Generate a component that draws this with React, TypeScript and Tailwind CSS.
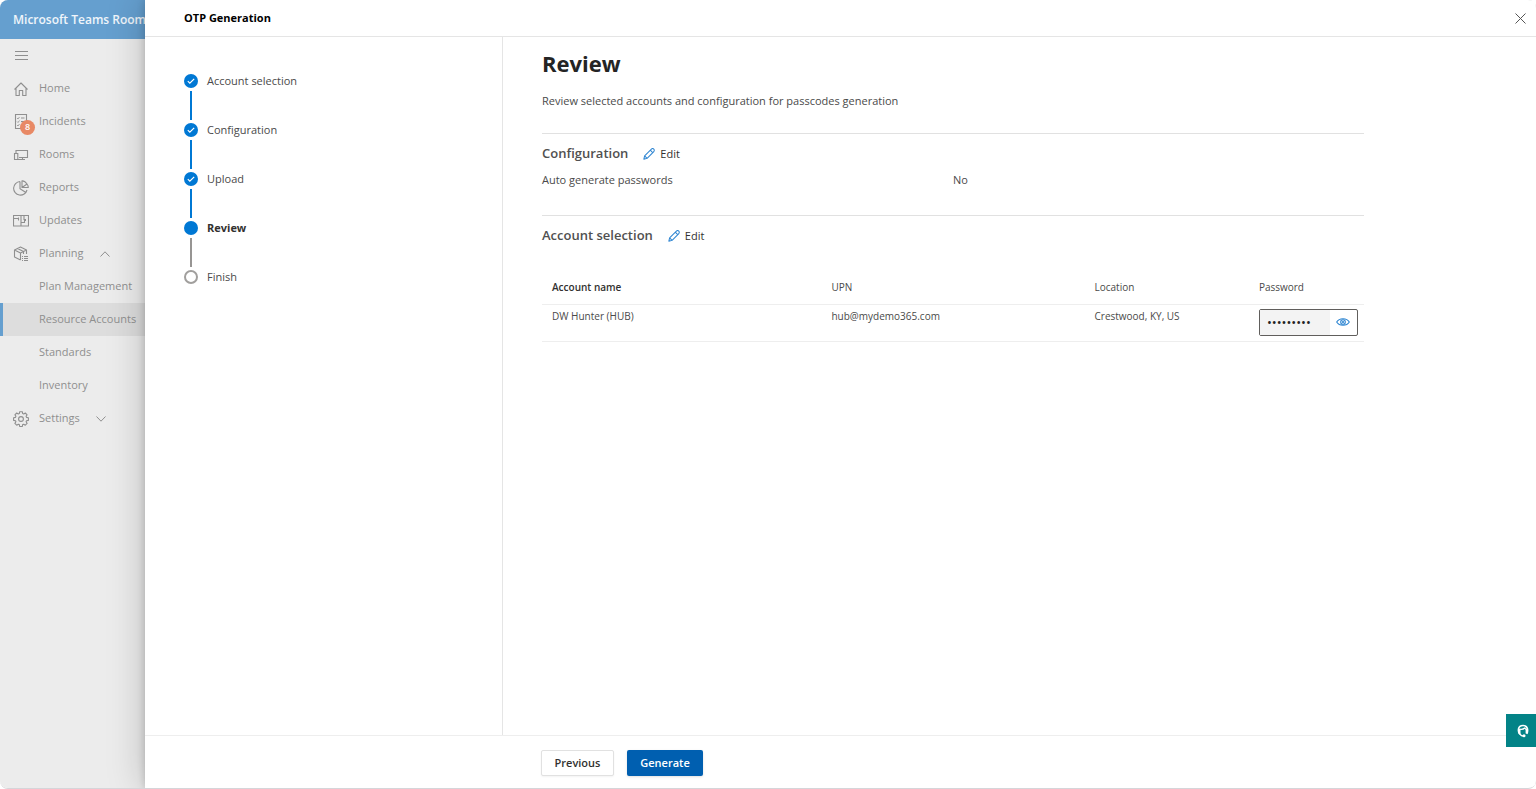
import { useState, type ReactNode } from "react";

type NavItem = {
  label: string;
  icon?: ReactNode;
  badge?: number;
  chevron?: "up" | "down";
  active?: boolean;
};

type StepState = "done" | "current" | "todo";

const iconProps = {
  viewBox: "0 0 16 16",
  fill: "none",
  stroke: "currentColor",
  strokeWidth: 1.1,
  className: "h-4 w-4 shrink-0",
  "aria-hidden": true,
};

const HomeIcon = () => (
  <svg {...iconProps}>
    <path d="M1.500 8.500 8 2l6.500 6.500M3 7.200v7.300h3.300V9.500h3.400v5H13V7.200" strokeLinejoin="round" />
  </svg>
);

const IncidentsIcon = () => (
  <svg {...iconProps}>
    <path d="M2.500.5h11v14h-11zM8 4h3.500M8 7.500h3.500M8 11h3.500" />
    <path d="m4 4 1 1 1.500-2M4 7.500l1 1 1.500-2M4 11l1 1 1.500-2" strokeWidth=".8" />
  </svg>
);

const RoomsIcon = () => (
  <svg {...iconProps}>
    <path d="M3 6.500V3.500h11.500v7H6M1.500 6.500h3.300v6H1.500zM5 12.500h7M9.500 10.500v2" />
  </svg>
);

const ReportsIcon = () => (
  <svg {...iconProps}>
    <path d="M7 1.500a6.800 6.800 0 1 0 7 8.500M7 1.500v7.300l5.500 3.500" />
    <path d="M9 7.500V.7a6.500 6.500 0 0 1 5 3.300zM9 7.500l5-3.500c.8 1 1.300 2.200 1.300 3.500z" strokeLinejoin="round" />
  </svg>
);

const UpdatesIcon = () => (
  <svg {...iconProps}>
    <path d="M.5 2.500h15v10.500H.5zM8 2.500v10.500M.5 5.500h5M5.500 4.500v3M11 2.500v4h2M8 9.500h3.500V7.500H13" />
  </svg>
);

const PlanningIcon = () => (
  <svg {...iconProps}>
    <path d="M7.500 14 1.500 11V4L7.500 1l6 3v4M1.500 4l6 3 6-3M7.500 7v7M4.500 2.500l6 3v2.500" strokeLinejoin="round" />
    <path d="M9 10.500h1M11 10.500h4M9 12.500h1M11 12.500h4M9 14.500h1M11 14.500h4" />
  </svg>
);

const SettingsIcon = () => (
  <svg {...iconProps}>
    <circle cx="8" cy="8" r="2.400" />
    <path
      d="M6.700.7h2.600l.4 1.900 1 .4 1.600-1 1.800 1.800-1 1.600.4 1 1.900.4v2.600l-1.900.4-.4 1 1 1.600-1.800 1.800-1.600-1-1 .4-.4 1.900H6.700l-.4-1.900-1-.4-1.600 1-1.800-1.800 1-1.600-.4-1-1.900-.4V6.800l1.900-.4.4-1-1-1.600L3.700 2l1.600 1 1-.4z"
      strokeLinejoin="round"
    />
  </svg>
);

const PencilIcon = () => (
  <svg viewBox="0 0 14 14" fill="none" stroke="currentColor" strokeWidth="1.2" className="h-3 w-3 text-[#2f86d2]" aria-hidden>
    <path d="m1 13 .9-3.800L9.800 1.300a1.900 1.900 0 0 1 2.800 2.800L4.800 12zM8.500 2.600l2.800 2.800M1.900 9.200l2.900 2.800" strokeLinejoin="round" />
  </svg>
);

const EyeIcon = () => (
  <svg viewBox="0 0 14 8" fill="none" stroke="currentColor" strokeWidth="1.1" className="h-2 w-3.5" aria-hidden>
    <path d="M.7 4C2 1.800 4.200.7 7 .7S12 1.800 13.300 4C12 6.200 9.800 7.300 7 7.300S2 6.200.7 4z" />
    <circle cx="7" cy="4" r="2.300" />
    <circle cx="7" cy="4" r=".5" fill="currentColor" />
  </svg>
);

const Chevron = ({ direction }: { direction: "up" | "down" }) => (
  <svg viewBox="0 0 10 6" fill="none" stroke="currentColor" className="h-1.5 w-2.5" aria-hidden>
    <path d={direction === "up" ? "M.5 5.500 5 .8l4.500 4.700" : "M.5.5 5 5.200 9.500.5"} />
  </svg>
);

const navItems: NavItem[] = [
  { label: "Home", icon: <HomeIcon /> },
  { label: "Incidents", icon: <IncidentsIcon />, badge: 8 },
  { label: "Rooms", icon: <RoomsIcon /> },
  { label: "Reports", icon: <ReportsIcon /> },
  { label: "Updates", icon: <UpdatesIcon /> },
  { label: "Planning", icon: <PlanningIcon />, chevron: "up" },
  { label: "Plan Management" },
  { label: "Resource Accounts", active: true },
  { label: "Standards" },
  { label: "Inventory" },
  { label: "Settings", icon: <SettingsIcon />, chevron: "down" },
];

const steps: Array<{ label: string; state: StepState }> = [
  { label: "Account selection", state: "done" },
  { label: "Configuration", state: "done" },
  { label: "Upload", state: "done" },
  { label: "Review", state: "current" },
  { label: "Finish", state: "todo" },
];

function Sidebar() {
  return (
    <aside className="w-[145px] shrink-0 overflow-hidden whitespace-nowrap bg-[#ececec] text-[#8f8f8f]">
      <div className="flex h-[39px] items-center bg-[#659fcf] pl-[13px] text-xs font-semibold text-white/90">
        Microsoft Teams Room
      </div>
      <button type="button" aria-label="Toggle navigation" className="flex h-[33px] items-center pl-[15px]">
        <svg viewBox="0 0 13 9" stroke="currentColor" className="h-[9px] w-[13px]">
          <path d="M0 .5h13M0 4.500h13M0 8.500h13" />
        </svg>
      </button>
      <nav>
        {navItems.map((item) => (
          <a
            key={item.label}
            href="#"
            className={`flex h-[33px] items-center border-l-[3px] text-[11px] ${
              item.active ? "border-[#659fcf] bg-[#dddddd]" : "border-transparent"
            } ${item.icon ? "pl-2.5" : "pl-9"}`}
          >
            {item.icon && (
              <span className="relative mr-2.5">
                {item.icon}
                {item.badge && (
                  <span className="absolute -right-1.5 top-1.5 flex h-[15px] w-[15px] items-center justify-center rounded-full bg-[#e88965] text-[9px] font-semibold text-white">
                    {item.badge}
                  </span>
                )}
              </span>
            )}
            {item.label}
            {item.chevron && (
              <span className="ml-4">
                <Chevron direction={item.chevron} />
              </span>
            )}
          </a>
        ))}
      </nav>
    </aside>
  );
}

function StepDot({ state }: { state: StepState }) {
  if (state === "todo") return <span className="h-3.5 w-3.5 rounded-full border-2 border-[#a19f9d]" />;
  return (
    <span className="flex h-3.5 w-3.5 items-center justify-center rounded-full bg-[#0078d4]">
      {state === "done" && (
        <svg viewBox="0 0 8 8" fill="none" stroke="white" strokeWidth="1.2" className="h-2 w-2" aria-hidden>
          <path d="m.8 4.200 2 2L7.200 1.800" />
        </svg>
      )}
    </span>
  );
}

function Steps() {
  return (
    <ol className="w-[358px] shrink-0 border-r border-[#e5e5e5] pl-[39px] pt-[37px] text-[11px] text-[#4a4a4a]">
      {steps.map((step, index) => (
        <li key={step.label} className="flex gap-[9px]">
          <div className="flex flex-col items-center">
            <StepDot state={step.state} />
            {index < steps.length - 1 && (
              <span className={`my-[3px] h-[29px] w-0.5 ${step.state === "current" ? "bg-[#979593]" : "bg-[#0078d4]"}`} />
            )}
          </div>
          <span className={`leading-[14px] ${step.state === "current" ? "font-bold text-[#323130]" : ""}`}>{step.label}</span>
        </li>
      ))}
    </ol>
  );
}

function SectionHeader({ title }: { title: string }) {
  return (
    <div className="flex h-5 items-center gap-[15px]">
      <h2 className="text-[13px] font-semibold text-[#505050]">{title}</h2>
      <button type="button" className="flex items-center gap-[5px] text-[11px] leading-4 text-[#323130]">
        <PencilIcon />
        Edit
      </button>
    </div>
  );
}

function PasswordField() {
  const [visible, setVisible] = useState(false);

  return (
    <div className="flex h-[27px] w-[99px] items-center rounded-xs border border-[#605e5c] bg-white">
      <input
        type={visible ? "text" : "password"}
        aria-label="Password"
        defaultValue="Passcode1"
        readOnly
        className="h-full min-w-0 flex-1 bg-[#f3f3f3] pl-[7px] text-[13px] text-[#222222] outline-none"
      />
      <button
        type="button"
        aria-label="Show password"
        onClick={() => setVisible(!visible)}
        className="flex h-full w-[27px] items-center justify-center text-[#2f86d2]"
      >
        <EyeIcon />
      </button>
    </div>
  );
}

function Review() {
  return (
    <div className="min-w-0 flex-1 px-[39px] pt-2.5 text-[#4a4a4a]">
      <div className="max-w-[822px]">
        <h1 className="text-[22px] font-bold leading-8 text-[#242424]">Review</h1>
        <p className="mt-[13px] text-[11px] leading-[18px]">Review selected accounts and configuration for passcodes generation</p>

        <section className="mt-[23px] h-[82px] border-t border-[#e1e1e1] pt-2.5">
          <SectionHeader title="Configuration" />
          <dl className="mt-[7px] grid grid-cols-2 text-[11px] leading-[18px]">
            <dt>Auto generate passwords</dt>
            <dd>No</dd>
          </dl>
        </section>

        <section className="border-t border-[#e1e1e1] pt-2.5">
          <SectionHeader title="Account selection" />
          <table className="mt-6 w-full table-fixed text-left text-[10px]">
            <thead>
              <tr className="h-[34px] border-b border-[#eeeeee]">
                <th className="w-[34%] pl-2.5 pt-0.5 font-semibold text-[#323130]">Account name</th>
                <th className="w-[32%] pl-2.5 pt-0.5 font-normal">UPN</th>
                <th className="w-[20%] pl-2.5 pt-0.5 font-normal">Location</th>
                <th className="w-[14%] pl-2.5 pt-0.5 font-normal">Password</th>
              </tr>
            </thead>
            <tbody>
              <tr className="h-[37px] border-b border-[#eeeeee] align-top">
                <td className="pl-2.5 pt-1">DW Hunter (HUB)</td>
                <td className="pl-2.5 pt-1">hub@mydemo365.com</td>
                <td className="pl-2.5 pt-1">Crestwood, KY, US</td>
                <td className="pl-2.5 pt-1">
                  <PasswordField />
                </td>
              </tr>
            </tbody>
          </table>
        </section>
      </div>
    </div>
  );
}

export default function App() {
  return (
    <div className="flex h-screen overflow-hidden rounded-lg border-b border-[#d5d5d9] bg-white font-['Open_Sans',sans-serif]">
      <Sidebar />
      <main className="relative flex min-w-0 flex-1 flex-col bg-white shadow-[0_0_36px_rgba(0,0,0,0.22),0_0_8px_rgba(0,0,0,0.18)]">
        <header className="flex h-[37px] items-center justify-between border-b border-[#e5e5e5] pl-[39px] pr-2.5">
          <span className="text-[11px] font-bold text-black">OTP Generation</span>
          <button type="button" aria-label="Close">
            <svg viewBox="0 0 11 11" stroke="#555555" className="h-[11px] w-[11px]">
              <path d="m.5.5 10 10M10.500.5l-10 10" />
            </svg>
          </button>
        </header>

        <div className="flex min-h-0 flex-1">
          <Steps />
          <Review />
        </div>

        <footer className="flex h-[53px] items-center gap-[13px] border-t border-[#eeeeee] pl-[396px] pt-0.5 text-[11px] font-semibold">
          <button type="button" className="h-[26px] w-[73px] rounded-xs border border-[#e1e1e1] bg-white text-[#323130] shadow-xs">
            Previous
          </button>
          <button type="button" className="h-[26px] w-[76px] rounded-xs bg-[#005fb0] text-white shadow-sm">
            Generate
          </button>
        </footer>

        <button
          type="button"
          aria-label="Help"
          className="absolute bottom-[41px] right-0 flex h-[33px] w-[30px] items-center justify-center bg-[#038387] pl-1"
        >
          <svg viewBox="0 0 12 14" fill="none" stroke="white" className="h-3.5 w-3" aria-hidden>
            <path d="M3 10.500C1.500 9 1.200 7 1.500 5 2 2.600 3.600 1.500 6 1.500s4 1.100 4.500 3.500c.3 2 .1 3.500-.7 4.800" strokeWidth="1.600" />
            <path d="M2.500 5.200c1.800.3 4 .1 5.200-1.200l1.800 1.600" strokeWidth="1.200" />
            <path d="M2.600 5v5M9.500 5v4.500" strokeWidth="1.800" />
            <path d="M3 10.200c.8 1.300 1.700 1.900 3.300 1.900" strokeWidth="1.500" />
            <circle cx="7" cy="11.800" r="1.500" fill="white" stroke="none" />
          </svg>
        </button>
      </main>
    </div>
  );
}
